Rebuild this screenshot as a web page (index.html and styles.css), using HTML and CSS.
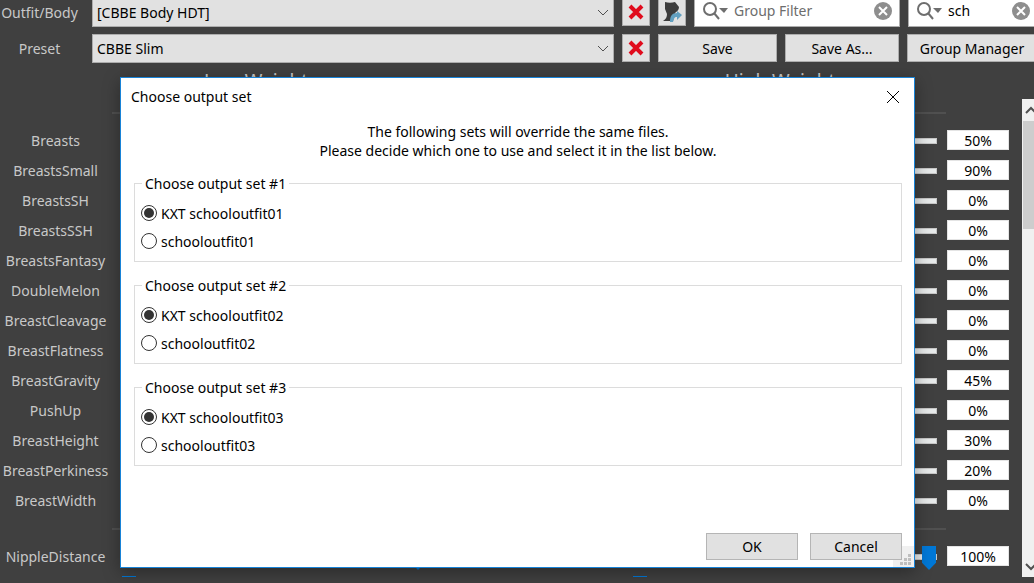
FILE: index.html
```html
<!DOCTYPE html>
<html lang="en">
<head>
    <meta charset="UTF-8">
    <meta name="viewport" content="width=device-width, initial-scale=1.0">
    <title>Choose output set</title>
    <link rel="stylesheet" href="styles.css">
</head>
<body>
    <div class="toolbar">
        <label class="toolbar-label" for="outfit">Outfit/Body</label>
        <div class="combo">
            <select id="outfit"><option>[CBBE Body HDT]</option></select>
            <svg class="chevron" viewBox="0 0 12 8"><path d="M1 1l5 5 5-5"/></svg>
        </div>
        <button class="btn icon-btn" aria-label="Clear outfit">
            <svg class="cross" viewBox="0 0 18 18"><path d="M3 3l12 12M15 3L3 15"/></svg>
        </button>
        <div class="tools">
            <button class="btn icon-btn" aria-label="Body preview">
                <svg class="torso" viewBox="0 0 20 22">
                    <path fill="#3c3c3c" d="M3 1c3 1 7 1 10 0l4 5c0 3-2 4-4 6l-2 8H1c3-2 4-4 4-7L3 8z"/>
                    <path fill="#62a0c0" d="M8 21c0-6 2-9 7-9v-2l5 4-5 5v-3c-3 0-3 2-4 5z"/>
                </svg>
            </button>
            <div class="search search-group">
                <svg class="lens" viewBox="0 0 26 18"><circle cx="8" cy="7" r="6"/><path d="M12 11l5 6"/><path class="drop" d="M17 6h9l-4 5z"/></svg>
                <input type="text" placeholder="Group Filter" aria-label="Group Filter">
                <button class="clear" aria-label="Clear group filter"><svg viewBox="0 0 18 18"><circle cx="9" cy="9" r="9"/><path d="M5 5l8 8M13 5l-8 8"/></svg></button>
            </div>
            <div class="search search-outfit">
                <svg class="lens" viewBox="0 0 26 18"><circle cx="8" cy="7" r="6"/><path d="M12 11l5 6"/><path class="drop" d="M17 6h9l-4 5z"/></svg>
                <input type="text" value="sch" aria-label="Outfit Filter">
                <button class="clear" aria-label="Clear outfit filter"><svg viewBox="0 0 18 18"><circle cx="9" cy="9" r="9"/><path d="M5 5l8 8M13 5l-8 8"/></svg></button>
            </div>
        </div>

        <label class="toolbar-label" for="preset">Preset</label>
        <div class="combo">
            <select id="preset"><option>CBBE Slim</option></select>
            <svg class="chevron" viewBox="0 0 12 8"><path d="M1 1l5 5 5-5"/></svg>
        </div>
        <button class="btn icon-btn" aria-label="Delete preset">
            <svg class="cross" viewBox="0 0 18 18"><path d="M3 3l12 12M15 3L3 15"/></svg>
        </button>
        <div class="tools">
            <button class="btn save">Save</button>
            <button class="btn save-as">Save As...</button>
            <button class="btn manager">Group Manager</button>
        </div>
    </div>

    <div class="weights">
        <span>Low Weight</span>
        <span>High Weight</span>
    </div>

    <div class="panel">
        <div class="sliders">
            <hr>
            <div class="row"><label for="s1">Breasts</label><input type="range" value="0" aria-label="Low"><input type="range" value="50" aria-label="High"><input class="value" id="s1" value="50%"></div>
            <div class="row"><label for="s2">BreastsSmall</label><input type="range" value="0" aria-label="Low"><input type="range" value="90" aria-label="High"><input class="value" id="s2" value="90%"></div>
            <div class="row"><label for="s3">BreastsSH</label><input type="range" value="0" aria-label="Low"><input type="range" value="0" aria-label="High"><input class="value" id="s3" value="0%"></div>
            <div class="row"><label for="s4">BreastsSSH</label><input type="range" value="0" aria-label="Low"><input type="range" value="0" aria-label="High"><input class="value" id="s4" value="0%"></div>
            <div class="row"><label for="s5">BreastsFantasy</label><input type="range" value="0" aria-label="Low"><input type="range" value="0" aria-label="High"><input class="value" id="s5" value="0%"></div>
            <div class="row"><label for="s6">DoubleMelon</label><input type="range" value="0" aria-label="Low"><input type="range" value="0" aria-label="High"><input class="value" id="s6" value="0%"></div>
            <div class="row"><label for="s7">BreastCleavage</label><input type="range" value="0" aria-label="Low"><input type="range" value="0" aria-label="High"><input class="value" id="s7" value="0%"></div>
            <div class="row"><label for="s8">BreastFlatness</label><input type="range" value="0" aria-label="Low"><input type="range" value="0" aria-label="High"><input class="value" id="s8" value="0%"></div>
            <div class="row"><label for="s9">BreastGravity</label><input type="range" value="0" aria-label="Low"><input type="range" value="45" aria-label="High"><input class="value" id="s9" value="45%"></div>
            <div class="row"><label for="s10">PushUp</label><input type="range" value="0" aria-label="Low"><input type="range" value="0" aria-label="High"><input class="value" id="s10" value="0%"></div>
            <div class="row"><label for="s11">BreastHeight</label><input type="range" value="0" aria-label="Low"><input type="range" value="30" aria-label="High"><input class="value" id="s11" value="30%"></div>
            <div class="row"><label for="s12">BreastPerkiness</label><input type="range" value="0" aria-label="Low"><input type="range" value="20" aria-label="High"><input class="value" id="s12" value="20%"></div>
            <div class="row"><label for="s13">BreastWidth</label><input type="range" value="0" aria-label="Low"><input type="range" value="0" aria-label="High"><input class="value" id="s13" value="0%"></div>
            <hr>
            <div class="row"><label for="s14">NippleDistance</label><input type="range" value="100" aria-label="Low"><input type="range" value="100" aria-label="High"><input class="value" id="s14" value="100%"></div>
            <div class="row"><span></span><input type="range" value="0" aria-label="Low"><input type="range" value="0" aria-label="High"></div>
        </div>
        <div class="scrollbar">
            <svg viewBox="0 0 17 22"><path d="M4 14l5-5 5 5"/></svg>
            <div class="scroll-thumb"></div>
            <svg viewBox="0 0 17 22"><path d="M4 9l5 5 5-5"/></svg>
        </div>
    </div>

    <div class="dialog" role="dialog" aria-labelledby="dialog-title">
        <div class="titlebar">
            <span id="dialog-title">Choose output set</span>
            <button class="close" aria-label="Close"><svg viewBox="0 0 12 12"><path d="M0 0l12 12M12 0L0 12"/></svg></button>
        </div>
        <form class="content">
            <p class="message">The following sets will override the same files.<br>Please decide which one to use and select it in the list below.</p>
            <fieldset>
                <legend>Choose output set #1</legend>
                <label><input type="radio" name="set1" checked>KXT schooloutfit01</label>
                <label><input type="radio" name="set1">schooloutfit01</label>
            </fieldset>
            <fieldset>
                <legend>Choose output set #2</legend>
                <label><input type="radio" name="set2" checked>KXT schooloutfit02</label>
                <label><input type="radio" name="set2">schooloutfit02</label>
            </fieldset>
            <fieldset>
                <legend>Choose output set #3</legend>
                <label><input type="radio" name="set3" checked>KXT schooloutfit03</label>
                <label><input type="radio" name="set3">schooloutfit03</label>
            </fieldset>
            <div class="actions">
                <button type="button" class="btn">OK</button>
                <button type="button" class="btn">Cancel</button>
            </div>
        </form>
        <svg class="grip" viewBox="0 0 21 21">
            <rect width="21" height="21" fill="#f0f0f0"/>
            <path fill="#bfbfbf" d="M15 8h3v3h-3zM11 12h3v3h-3zM15 12h3v3h-3zM7 16h3v3H7zM11 16h3v3h-3zM15 16h3v3h-3z"/>
        </svg>
    </div>
</body>
</html>
```

FILE: styles.css
```css
* {
    box-sizing: border-box;
}
body {
    margin: 0;
    height: 100vh;
    display: flex;
    flex-direction: column;
    position: relative;
    overflow: hidden;
    background-color: #404040;
    color: #c8c8c8;
    font-family: "Noto Sans", "Open Sans", sans-serif;
    font-size: 14px;
    line-height: 19px;
}
button, input, select {
    font: inherit;
    color: #000;
    margin: 0;
}
svg {
    display: block;
    fill: none;
}

/* toolbar */
.toolbar {
    display: grid;
    grid-template-columns: 84px 1fr 28px 376px;
    gap: 7px 8px;
    margin-top: -2px;
}
.toolbar-label {
    align-self: center;
    text-align: center;
    white-space: nowrap;
    padding-right: 5px;
}
.combo {
    position: relative;
}
.combo select {
    appearance: none;
    display: block;
    width: 100%;
    height: 29px;
    padding: 0 4px;
    border: 1px solid #adadad;
    border-radius: 0;
    background-color: #e1e1e1;
}
.chevron {
    position: absolute;
    right: 5px;
    top: 11px;
    width: 12px;
    height: 8px;
    stroke: #505050;
}
.btn {
    height: 28px;
    padding: 0;
    border: 1px solid #adadad;
    background-color: #e1e1e1;
}
.icon-btn {
    flex: none;
    width: 28px;
    display: flex;
    align-items: center;
    justify-content: center;
}
.cross {
    width: 18px;
    height: 18px;
    stroke: #e00b1c;
    stroke-width: 4;
}
.torso {
    flex: none;
    width: 20px;
    height: 22px;
}
.tools {
    display: flex;
    gap: 8px;
}
.search {
    display: flex;
    align-items: center;
    height: 29px;
    padding: 0 7px 4px;
    border: 1px solid #adadad;
    background-color: #fff;
}
.search-group {
    flex: none;
    width: 206px;
}
.search-outfit, .manager {
    flex: none;
    width: 130px;
}
.search input {
    flex: 1;
    min-width: 0;
    padding: 0 0 0 6px;
    border: none;
    outline: none;
    background: none;
}
.search input::placeholder {
    color: #6d6d6d;
}
.lens {
    flex: none;
    width: 26px;
    height: 18px;
    stroke: #6e6e6e;
    stroke-width: 2;
}
.lens .drop {
    fill: #6e6e6e;
    stroke: none;
}
.clear {
    width: 18px;
    height: 18px;
    padding: 0;
    border: none;
    background: none;
}
.clear circle {
    fill: #8e8e8e;
}
.clear path {
    stroke: #fff;
    stroke-width: 2;
}
.save {
    flex: none;
    width: 119px;
}
.save-as {
    flex: none;
    width: 114px;
}

/* slider panel */
.weights {
    display: grid;
    grid-template-columns: 1fr 1fr;
    margin: 6px -8px 0 -6px;
    height: 30px;
    font-size: 19px;
    line-height: 24px;
    text-align: center;
}
.panel {
    flex: 1;
    min-height: 0;
    display: flex;
    gap: 13px;
    margin-bottom: 6px;
    overflow: hidden;
}
.sliders {
    flex: 1;
}
.sliders hr {
    height: 2px;
    margin: 13px 63px 11px 112px;
    border: none;
    background-color: #505050;
}
.row {
    display: grid;
    grid-template-columns: 111px 1fr 1fr 62px;
    align-items: center;
    column-gap: 10px;
    height: 30px;
}
.row label {
    text-align: center;
}
.row input[type="range"] {
    appearance: none;
    width: 100%;
    height: 26px;
    padding-top: 2px;
    background: none;
}
.row input[type="range"]:nth-child(2) {
    padding-right: 98px;
}
.row input[type="range"]:nth-child(3) {
    padding-left: 98px;
}
.row input[type="range"]::-webkit-slider-runnable-track {
    height: 6px;
    border: 1px solid #c6c6c6;
    background-color: #e7eaea;
}
.row input[type="range"]::-webkit-slider-thumb {
    appearance: none;
    width: 14px;
    height: 24px;
    margin-top: -9px;
    background-color: #0078d7;
    clip-path: polygon(0 0, 100% 0, 100% 70%, 50% 100%, 0 70%);
}
.row .value {
    width: 62px;
    height: 20px;
    padding: 0;
    border: 1px solid #e4e4e4;
    background-color: #fff;
    text-align: center;
}
.scrollbar {
    display: flex;
    flex-direction: column;
    justify-content: space-between;
    width: 17px;
    margin-right: -5px;
    background-color: #f0f0f0;
}
.scrollbar svg {
    width: 17px;
    height: 22px;
    stroke: #505050;
    stroke-width: 2;
}
.scroll-thumb {
    height: 108px;
    margin: 0 1px auto;
    background-color: #cdcdcd;
}

/* dialog */
.dialog {
    position: absolute;
    top: 77px;
    left: 120px;
    right: 119px;
    border: 1px solid #1883d7;
    background-color: #fff;
    color: #000;
    box-shadow: 0 4px 16px rgba(0, 0, 0, 0.35);
}
.titlebar {
    display: flex;
    align-items: center;
    justify-content: space-between;
    height: 37px;
    padding: 0 15px 0 10px;
}
.close {
    padding: 0;
    border: none;
    background: none;
}
.close svg {
    width: 12px;
    height: 12px;
    stroke: #000;
}
.content {
    padding: 7px 12px 7px 13px;
}
.message {
    margin: 0 0 14px;
    text-align: center;
}
fieldset {
    min-width: 0;
    margin: 0 0 14px;
    padding: 6px;
    border: 1px solid #dcdcdc;
}
legend {
    margin-left: 1px;
    padding: 0 3px;
}
fieldset label {
    display: flex;
    align-items: center;
    gap: 4px;
    height: 28px;
}
fieldset input {
    appearance: none;
    width: 16px;
    height: 16px;
    border: 1px solid #333;
    border-radius: 50%;
    background-color: #fff;
}
fieldset input:checked {
    background-color: #333;
    background-clip: content-box;
    padding: 2px;
}
.actions {
    display: flex;
    justify-content: flex-end;
    gap: 12px;
    margin-top: 67px;
}
.actions .btn {
    position: relative;
    z-index: 1;
    width: 92px;
    height: 27px;
    border: 1px solid #b5b5b5;
}
.grip {
    position: absolute;
    right: 0;
    bottom: 0;
    width: 21px;
    height: 21px;
}
```
